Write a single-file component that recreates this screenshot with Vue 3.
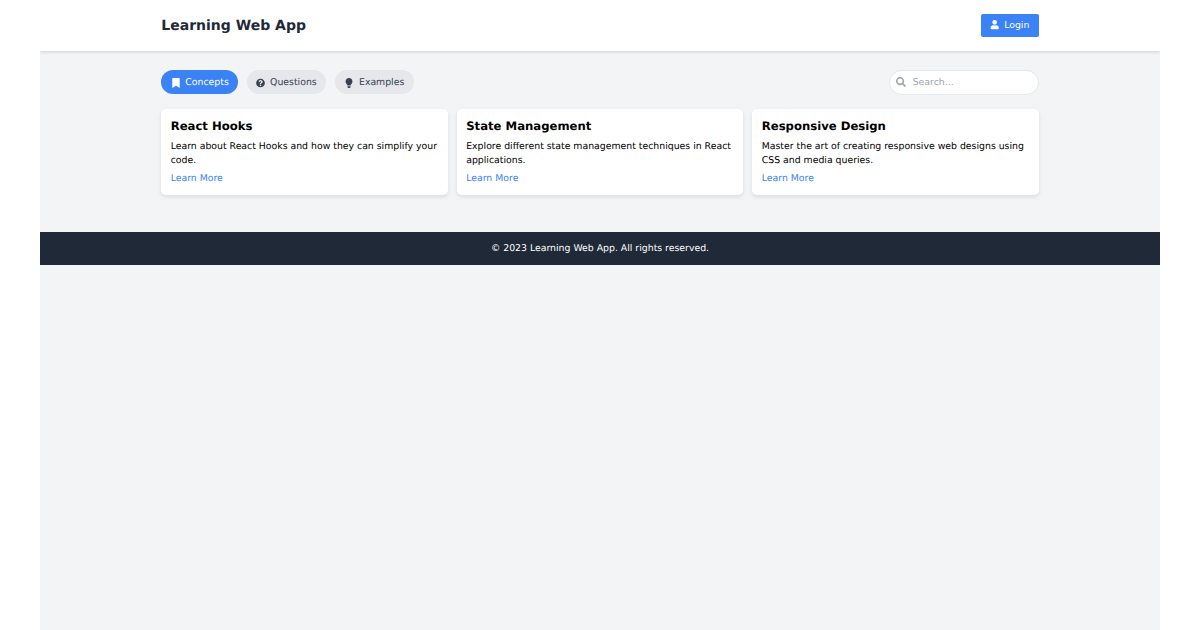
<template>
  <div class="page">
    <header class="header">
      <div class="header__inner">
        <h1 class="logo">Learning Web App</h1>
        <button class="login">
          <svg class="icon" viewBox="0 0 448 512"><path fill="currentColor" d="M224 256a128 128 0 1 0 0-256 128 128 0 0 0 0 256zm90 32h-17a174 174 0 0 1-146 0h-17C60 288 0 348 0 422v42c0 26 22 48 48 48h352c26 0 48-22 48-48v-42c0-74-60-134-134-134z"/></svg>
          Login
        </button>
      </div>
    </header>

    <main class="main">
      <div class="toolbar">
        <nav class="tabs">
          <a v-for="tab in tabs" :key="tab.name" class="tab" :class="{ 'tab--active': tab.active }">
            <svg class="icon" :class="{ 'icon--narrow': tab.name === 'Questions' }" :viewBox="tab.box"><path fill="currentColor" :d="tab.path" /></svg>
            {{ tab.name }}
          </a>
        </nav>
        <div class="search">
          <svg class="search__icon" viewBox="0 0 512 512"><path fill="currentColor" d="M505 442 405 343c-4-5-10-7-17-7h-16a208 208 0 1 0-36 36v16c0 7 2 13 7 17l99 100c10 9 25 9 34 0l28-28c10-10 10-25 1-35zM208 336a128 128 0 1 1 0-256 128 128 0 0 1 0 256z"/></svg>
          <input class="search__input" type="text" placeholder="Search..." />
        </div>
      </div>

      <div class="cards">
        <div v-for="card in cards" :key="card.title" class="card">
          <h2 class="card__title">{{ card.title }}</h2>
          <p class="card__text">{{ card.text }}</p>
          <a class="card__link">Learn More</a>
        </div>
      </div>
    </main>

    <footer class="footer">© 2023 Learning Web App. All rights reserved.</footer>
  </div>
</template>

<script setup>
const tabs = [
  {
    name: "Concepts",
    active: true,
    box: "0 0 384 512",
    path: "M0 512V48C0 22 22 0 48 0h288c26 0 48 22 48 48v464L192 400 0 512z",
  },
  {
    name: "Questions",
    box: "0 0 512 512",
    path: "M504 256a248 248 0 1 1-496 0 248 248 0 0 1 496 0zM263 90c-55 0-89 23-116 63-4 5-3 12 2 16l35 26c5 4 13 3 17-2 18-23 30-36 57-36 21 0 46 13 46 33 0 15-12 23-33 34-23 14-55 31-55 73v4c0 7 5 12 12 12h56c7 0 12-5 12-12v-2c0-29 85-30 85-109 0-60-62-100-118-100zm-7 254a47 47 0 1 0 0 94 47 47 0 0 0 0-94z",
  },
  {
    name: "Examples",
    box: "0 0 352 512",
    path: "M96 454c0 6 2 12 5 18l17 26c5 8 17 14 27 14h62c10 0 22-6 27-14l17-26c3-5 5-12 5-18v-38H96v38zM176 0C74 0 0 83 0 176c0 44 16 85 44 116 17 19 43 60 52 92h160c9-32 35-73 52-92 28-31 44-72 44-116C352 79 273 0 176 0z",
  },
];

const cards = [
  {
    title: "React Hooks",
    text: "Learn about React Hooks and how they can simplify your code.",
  },
  {
    title: "State Management",
    text: "Explore different state management techniques in React applications.",
  },
  {
    title: "Responsive Design",
    text: "Master the art of creating responsive web designs using CSS and media queries.",
  },
];
</script>

<style>
html,
body {
  background: #ffffff;
}
</style>

<style scoped>
.page {
  margin: 0 40px;
  height: 630px;
  overflow: hidden;
  background: #f3f4f6;
  font-family: "DejaVu Sans", sans-serif;
  text-rendering: geometricPrecision;
}

.header {
  height: 51px;
  background: #ffffff;
  box-shadow: 0 1px 3px rgba(0, 0, 0, 0.15);
}

.header__inner {
  width: 877.33px;
  height: 100%;
  margin: 0 auto;
  display: flex;
  align-items: center;
  justify-content: space-between;
}

.logo {
  margin: 0;
  font-size: 14px;
  font-weight: 700;
  color: #1f2937;
}

.login {
  display: flex;
  align-items: center;
  gap: 4.67px;
  height: 23.33px;
  padding: 0 9.33px 1px;
  border: none;
  border-radius: 2px;
  background: #3b82f6;
  color: #ffffff;
  font-family: inherit;
  font-size: 9.33px;
}

.icon {
  width: 10px;
  height: 10px;
  flex: none;
}

.login .icon {
  width: 9.33px;
  height: 9.33px;
}

.icon--narrow {
  width: 9px;
}

.main {
  width: 877.33px;
  margin: 0 auto;
  padding-top: 19px;
  height: 162px;
}

.toolbar {
  display: flex;
  align-items: flex-start;
  justify-content: space-between;
}

.tabs {
  display: flex;
  gap: 9px;
}

.tab {
  display: flex;
  align-items: center;
  gap: 4.67px;
  height: 24px;
  box-sizing: border-box;
  padding: 1px 9.33px 0;
  border-radius: 12px;
  background: #e5e7eb;
  color: #374151;
  font-size: 9.33px;
}

.tab--active {
  background: #3b82f6;
  color: #ffffff;
}

.search {
  position: relative;
  width: 150px;
}

.search__icon {
  position: absolute;
  left: 7px;
  top: 7.25px;
  width: 10px;
  height: 10px;
  color: #9ca3af;
}

.search__input {
  display: block;
  width: 100%;
  height: 24.5px;
  box-sizing: border-box;
  padding: 0 9.33px 1px 23px;
  border: 1px solid #e5e7eb;
  border-radius: 13px;
  background: #ffffff;
  font-family: inherit;
  font-size: 9.33px;
  outline: none;
}

.search__input::placeholder {
  color: #9ca3af;
}

.cards {
  display: grid;
  grid-template-columns: repeat(3, 1fr);
  gap: 9.33px;
  margin-top: 14.5px;
}

.card {
  padding: 9.33px 9.33px 9px;
  background: #ffffff;
  border-radius: 5px;
  box-shadow: 0 2px 4px rgba(0, 0, 0, 0.1);
}

.card__title {
  margin: 0 0 5.67px;
  font-size: 11.67px;
  font-weight: 700;
  line-height: 16px;
  color: #000000;
}

.card__text {
  margin: 0 0 3.67px;
  font-size: 9.33px;
  line-height: 14px;
  color: #000000;
}

.card__link {
  display: block;
  font-size: 9.33px;
  line-height: 14px;
  color: #3b82f6;
}

.footer {
  height: 33px;
  background: #1f2937;
  color: #ffffff;
  font-size: 9.33px;
  line-height: 34px;
  text-align: center;
}
</style>
